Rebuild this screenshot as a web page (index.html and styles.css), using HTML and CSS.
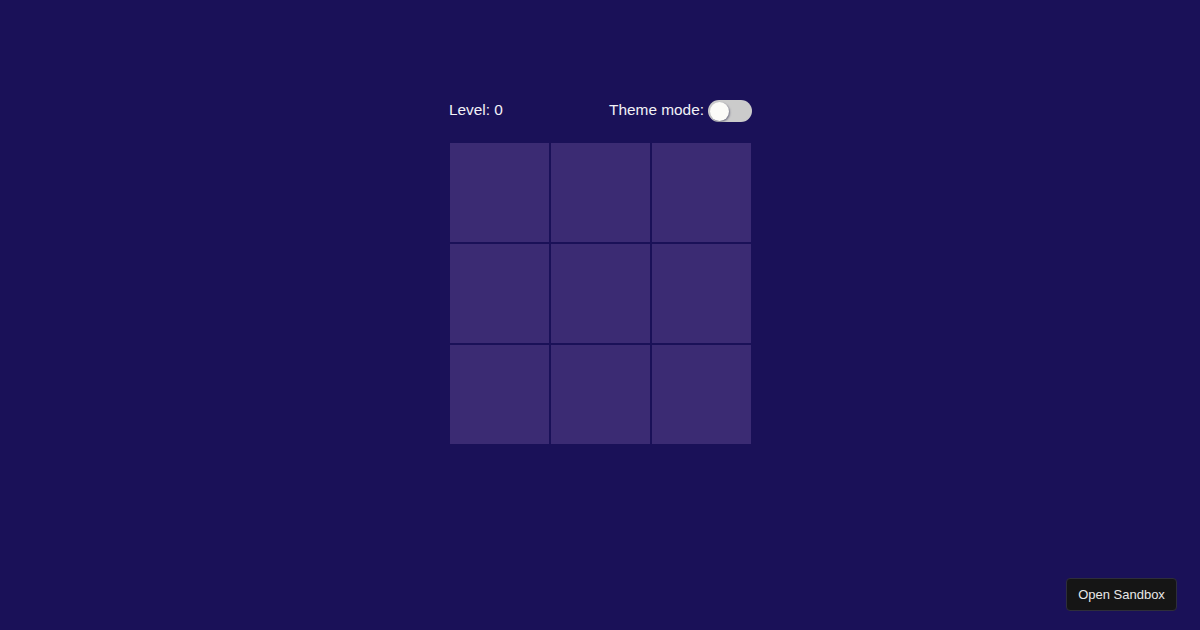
FILE: index.html
```html
<!DOCTYPE html>
<html>
<head>
<meta charset="utf-8">
<link rel="stylesheet" href="styles.css">
</head>
<body>
<main class="game">
  <div class="header">
    <span class="level">Level: 0</span>
    <label class="theme">
      <span>Theme mode:</span>
      <span class="switch"><span class="knob"></span></span>
    </label>
  </div>
  <div class="board">
    <div class="cell"></div><div class="cell"></div><div class="cell"></div>
    <div class="cell"></div><div class="cell"></div><div class="cell"></div>
    <div class="cell"></div><div class="cell"></div><div class="cell"></div>
  </div>
</main>
<button class="sandbox">Open Sandbox</button>
</body>
</html>
```
FILE: styles.css
```css
html, body {
  margin: 0;
  height: 100%;
}
body {
  background: #1a1158;
  font-family: "Liberation Sans", Arial, sans-serif;
  color: #f2f2f7;
  position: relative;
}
.game {
  width: 304px;
  margin: 0 auto;
  padding-top: 100px;
  display: flex;
  flex-direction: column;
  align-items: center;
}
.header {
  width: 304px;
  height: 22px;
  display: flex;
  justify-content: space-between;
  align-items: center;
  font-size: 15.4px;
  line-height: 20px;
}
.level {
  padding-left: 1px;
  margin-top: -2px;
}
.theme {
  display: flex;
  align-items: center;
  gap: 4px;
}
.theme > span:first-child {
  margin-top: -2px;
}
.switch {
  width: 44px;
  height: 22px;
  border-radius: 11px;
  background: #cbcbcb;
  display: flex;
  align-items: center;
  padding-left: 2px;
  box-sizing: border-box;
}
.knob {
  width: 19px;
  height: 19px;
  border-radius: 50%;
  background: #fbfbf8;
  box-shadow: 1px 1px 2px rgba(60, 60, 90, 0.6);
}
.board {
  margin-top: 21px;
  margin-left: 1px;
  display: grid;
  grid-template-columns: repeat(3, 99px);
  grid-template-rows: repeat(3, 99px);
  gap: 2px;
}
.cell {
  background: #3b2b73;
}
.sandbox {
  position: absolute;
  right: 23px;
  bottom: 19px;
  width: 111px;
  height: 33px;
  background: #151515;
  color: #e8e8e8;
  border: 1px solid #2e2e3a;
  border-radius: 4px;
  font-family: "Liberation Sans", Arial, sans-serif;
  font-size: 13px;
  padding: 0;
}
```
